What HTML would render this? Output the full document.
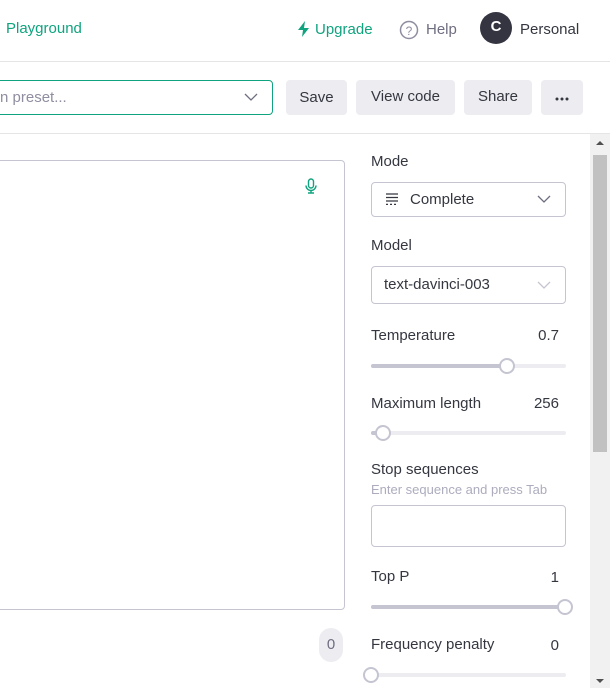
<!DOCTYPE html><html><head><style>
*{box-sizing:border-box;margin:0;padding:0}
body{width:610px;height:688px;overflow:hidden;background:#fff;font-family:"Liberation Sans",sans-serif;color:#353740;position:relative;font-size:15px}
.a{position:absolute}
.btn{position:absolute;top:80px;height:35px;background:#ececf1;border-radius:4px;font-size:15px;line-height:34px;text-align:center;color:#353740}
.lbl{position:absolute;left:371px;font-size:15px;color:#353740}
.val{position:absolute;right:51px;font-size:15px;color:#353740}
.track{position:absolute;left:371px;width:195px;height:4px;background:#ececf1;border-radius:2px}
.fill{position:absolute;left:0;top:0;height:4px;background:#c5c5d2;border-radius:2px}
.knob{position:absolute;width:16px;height:16px;border:2px solid #c5c5d2;background:#fff;border-radius:50%;top:-6px}
</style></head><body>
<div class="a" style="left:6px;top:20px;color:#10a37f;font-size:15px">Playground</div>
<svg class="a" style="left:297px;top:21px" width="14" height="16" viewBox="0 0 14 16"><path d="M8 0L1 9h5l-1 7 7-9H7z" fill="#10a37f"/></svg>
<div class="a" style="left:315px;top:21px;color:#10a37f">Upgrade</div>
<svg class="a" style="left:399px;top:20px" width="20" height="20"><circle cx="10" cy="10" r="8.5" fill="none" stroke="#8e8ea0" stroke-width="1.5"/><text x="10" y="15" font-size="12" text-anchor="middle" fill="#8e8ea0" font-family="Liberation Sans">?</text></svg>
<div class="a" style="left:426px;top:21px;color:#6e6e80">Help</div>
<div class="a" style="left:480px;top:12px;width:32px;height:32px;border-radius:50%;background:#343541;color:#fff;text-align:center;line-height:30px;font-size:15px;font-weight:bold">C</div>
<div class="a" style="left:520px;top:21px">Personal</div>
<div class="a" style="left:0;top:61px;width:610px;height:1px;background:#e5e5e5"></div>
<div class="a" style="left:-10px;top:80px;width:283px;height:35px;border:1px solid #10a37f;border-radius:4px"></div>
<div class="a" style="left:0;top:89px;color:#8e8ea0">n preset...</div>
<svg class="a" style="left:244px;top:92px" width="14" height="10"><path d="M1 2l6 6 6-6" fill="none" stroke="#6e6e80" stroke-width="1.3"/></svg>
<div class="btn" style="left:286px;width:61px;line-height:36px">Save</div>
<div class="btn" style="left:356px;width:99px">View code</div>
<div class="btn" style="left:464px;width:68px">Share</div>
<div class="btn" style="left:541px;width:42px"><svg width="14" height="4" style="margin-top:15px"><circle cx="2" cy="2" r="1.5" fill="#353740"/><circle cx="7" cy="2" r="1.5" fill="#353740"/><circle cx="12" cy="2" r="1.5" fill="#353740"/></svg></div>
<div class="a" style="left:0;top:133px;width:610px;height:1px;background:#e5e5e5"></div>
<div class="a" style="left:-10px;top:160px;width:355px;height:450px;border:1px solid #c5c5d2;border-radius:4px"></div>
<svg class="a" style="left:304px;top:178px" width="14" height="16" viewBox="0 0 14 16"><rect x="4.5" y="1" width="5" height="9" rx="2.5" fill="none" stroke="#10a37f" stroke-width="1.4"/><path d="M2 7.5a5 5 0 0 0 10 0M7 12.5v2M4 15h6" fill="none" stroke="#10a37f" stroke-width="1.4"/></svg>
<div class="a" style="left:319px;top:628px;width:24px;height:34px;border-radius:12px;background:#ececf1;text-align:center;line-height:34px;color:#6e6e80">0</div>
<div class="lbl" style="top:153px">Mode</div>
<div class="a" style="left:371px;top:182px;width:195px;height:35px;border:1px solid #c5c5d2;border-radius:4px"></div>
<svg class="a" style="left:386px;top:193px" width="12" height="12"><path d="M0 1h12M0 4.5h12M0 8h12" stroke="#353740" stroke-width="1.3"/><path d="M0 11.5h2M4 11.5h2M8 11.5h2" stroke="#353740" stroke-width="1.5"/></svg>
<div class="a" style="left:410px;top:191px">Complete</div>
<svg class="a" style="left:537px;top:194px" width="14" height="10"><path d="M1 2l6 6 6-6" fill="none" stroke="#6e6e80" stroke-width="1.3"/></svg>
<div class="lbl" style="top:237px">Model</div>
<div class="a" style="left:371px;top:266px;width:195px;height:38px;border:1px solid #c5c5d2;border-radius:4px"></div>
<div class="a" style="left:384px;top:276px">text-davinci-003</div>
<svg class="a" style="left:537px;top:280px" width="14" height="10"><path d="M1 2l6 6 6-6" fill="none" stroke="#c5c5d2" stroke-width="1.3"/></svg>
<div class="lbl" style="top:327px">Temperature</div><div class="val" style="top:327px">0.7</div>
<div class="track" style="top:364px"><div class="fill" style="width:136px"></div><div class="knob" style="left:128px"></div></div>
<div class="lbl" style="top:395px">Maximum length</div><div class="val" style="top:395px">256</div>
<div class="track" style="top:431px"><div class="fill" style="width:12px"></div><div class="knob" style="left:4px"></div></div>
<div class="lbl" style="top:461px">Stop sequences</div>
<div class="a" style="left:371px;top:482px;font-size:13px;color:#acacbe">Enter sequence and press Tab</div>
<div class="a" style="left:371px;top:505px;width:195px;height:42px;border:1px solid #c5c5d2;border-radius:4px"></div>
<div class="lbl" style="top:568px">Top P</div><div class="val" style="top:569px">1</div>
<div class="track" style="top:605px"><div class="fill" style="width:195px"></div><div class="knob" style="left:186px"></div></div>
<div class="lbl" style="top:636px">Frequency penalty</div><div class="val" style="top:637px">0</div>
<div class="track" style="top:673px"><div class="knob" style="left:-8px"></div></div>
<div class="a" style="left:590px;top:134px;width:20px;height:554px;background:#f1f1f1"></div>
<div class="a" style="left:593px;top:155px;width:14px;height:297px;background:#c1c1c1"></div>
<svg class="a" style="left:596px;top:140px" width="8" height="6"><path d="M0 5L4 1 8 5z" fill="#505050"/></svg>
<svg class="a" style="left:596px;top:678px" width="8" height="6"><path d="M0 1L4 5 8 1z" fill="#505050"/></svg>
</body></html>
